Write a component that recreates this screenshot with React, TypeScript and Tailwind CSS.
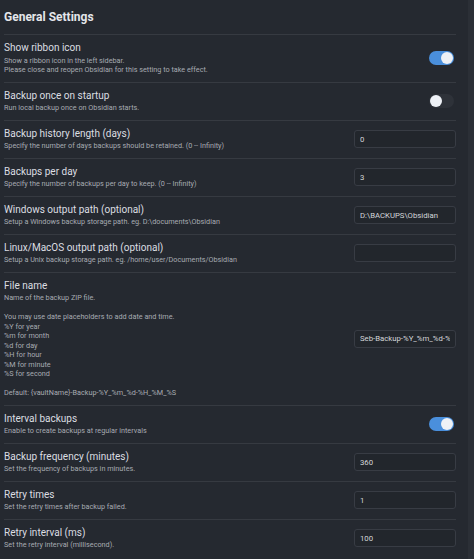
import React from 'react';

type Row =
  | { kind: 'toggle'; name: string; desc: string[]; on: boolean }
  | { kind: 'text'; name: string; desc: string[]; value: string };

const rows: Row[] = [
  {
    kind: 'toggle',
    name: 'Show ribbon icon',
    desc: ['Show a ribbon icon in the left sidebar.', 'Please close and reopen Obsidian for this setting to take effect.'],
    on: true,
  },
  { kind: 'toggle', name: 'Backup once on startup', desc: ['Run local backup once on Obsidian starts.'], on: false },
  {
    kind: 'text',
    name: 'Backup history length (days)',
    desc: ['Specify the number of days backups should be retained. (0 -- Infinity)'],
    value: '0',
  },
  {
    kind: 'text',
    name: 'Backups per day',
    desc: ['Specify the number of backups per day to keep. (0 -- Infinity)'],
    value: '3',
  },
  {
    kind: 'text',
    name: 'Windows output path (optional)',
    desc: ['Setup a Windows backup storage path. eg. D:\\documents\\Obsidian'],
    value: 'D:\\BACKUPS\\Obsidian',
  },
  {
    kind: 'text',
    name: 'Linux/MacOS output path (optional)',
    desc: ['Setup a Unix backup storage path. eg. /home/user/Documents/Obsidian'],
    value: '',
  },
  {
    kind: 'text',
    name: 'File name',
    desc: [
      'Name of the backup ZIP file.',
      '',
      'You may use date placeholders to add date and time.',
      '%Y for year',
      '%m for month',
      '%d for day',
      '%H for hour',
      '%M for minute',
      '%S for second',
      '',
      'Default: {vaultName}-Backup-%Y_%m_%d-%H_%M_%S',
    ],
    value: 'Seb-Backup-%Y_%m_%d-%H_%M_%S',
  },
  { kind: 'toggle', name: 'Interval backups', desc: ['Enable to create backups at regular intervals'], on: true },
  {
    kind: 'text',
    name: 'Backup frequency (minutes)',
    desc: ['Set the frequency of backups in minutes.'],
    value: '360',
  },
  { kind: 'text', name: 'Retry times', desc: ['Set the retry times after backup failed.'], value: '1' },
  { kind: 'text', name: 'Retry interval (ms)', desc: ['Set the retry interval (millisecond).'], value: '100' },
];

function Toggle({ on }: { on: boolean }) {
  return (
    <div
      className={
        'w-[25px] h-[14px] rounded-full flex items-center px-[1px] ' +
        (on ? 'bg-[#4a8fdc] justify-end' : 'bg-[#2e3239] justify-start')
      }
    >
      <div className="w-[12px] h-[12px] rounded-full bg-[#eef1f6]" />
    </div>
  );
}

export default function App() {
  return (
    <div
      className="w-[474px] h-[559px] overflow-hidden bg-[#252930] flex"
      style={{ fontFamily: 'Roboto, "Noto Sans", sans-serif' }}
    >
      <div className="w-[456px] pl-[4px]">
        <div className="h-[34px] flex items-center">
          <h1 className="text-[12px] font-bold text-[#e4e6ea]">General Settings</h1>
        </div>
        {rows.map((r) => (
          <div key={r.name} className="border-t border-[#363a41] py-[7px] flex items-center gap-3">
            <div className="flex-1 min-w-0">
              <div className="text-[10px] leading-[12.5px] text-[#dcdee2]">{r.name}</div>
              <div className="mt-[1px] text-[7.25px] leading-[9.5px] text-[#a7abb2] whitespace-nowrap">
                {r.desc.map((d, i) => (
                  <div key={i} className="h-[9.5px]">
                    {d}
                  </div>
                ))}
              </div>
            </div>
            {r.kind === 'toggle' ? (
              <div className="pr-[2px]">
                <Toggle on={r.on} />
              </div>
            ) : (
              <input
                readOnly
                value={r.value}
                className="w-[102px] h-[18px] rounded-[3px] border border-[#383c44] bg-[#22262c] px-[5px] text-[7.75px] text-[#d4d6da] outline-none"
              />
            )}
          </div>
        ))}
      </div>
      <div className="flex-1" />
      <div className="w-[6px] bg-[#2b2f36]" />
    </div>
  );
}
